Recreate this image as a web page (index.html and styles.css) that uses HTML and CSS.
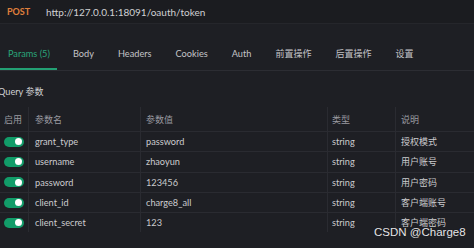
FILE: index.html
```html
<!DOCTYPE html>
<html>
<head>
<meta charset="utf-8">
<link rel="stylesheet" href="styles.css">
</head>
<body>
<div class="page">
  <div class="topbar">
    <span class="method">POST</span>
    <span class="url">http://127.0.0.1:18091/oauth/token</span>
  </div>
  <div class="tabs">
    <div class="tab active">Params (5)</div>
    <div class="tab">Body</div>
    <div class="tab">Headers</div>
    <div class="tab">Cookies</div>
    <div class="tab">Auth</div>
    <div class="tab zh">前置操作</div>
    <div class="tab zh">后置操作</div>
    <div class="tab zh">设置</div>
  </div>
  <div class="section-title">Query <span class="zh">参数</span></div>
  <div class="table">
    <div class="row head">
      <div class="cell c1 zh">启用</div>
      <div class="cell c2 zh">参数名</div>
      <div class="cell c3 zh">参数值</div>
      <div class="cell c4 zh">类型</div>
      <div class="cell c5 zh">说明</div>
    </div>
    <div class="row">
      <div class="cell c1"><span class="toggle"></span></div>
      <div class="cell c2">grant_type</div>
      <div class="cell c3">password</div>
      <div class="cell c4">string</div>
      <div class="cell c5 zh">授权模式</div>
    </div>
    <div class="row">
      <div class="cell c1"><span class="toggle"></span></div>
      <div class="cell c2">username</div>
      <div class="cell c3">zhaoyun</div>
      <div class="cell c4">string</div>
      <div class="cell c5 zh">用户账号</div>
    </div>
    <div class="row">
      <div class="cell c1"><span class="toggle"></span></div>
      <div class="cell c2">password</div>
      <div class="cell c3">123456</div>
      <div class="cell c4">string</div>
      <div class="cell c5 zh">用户密码</div>
    </div>
    <div class="row">
      <div class="cell c1"><span class="toggle"></span></div>
      <div class="cell c2">client_id</div>
      <div class="cell c3">charge8_all</div>
      <div class="cell c4">string</div>
      <div class="cell c5 zh">客户端账号</div>
    </div>
    <div class="row last">
      <div class="cell c1"><span class="toggle"></span></div>
      <div class="cell c2">client_secret</div>
      <div class="cell c3">123</div>
      <div class="cell c4">string</div>
      <div class="cell c5 zh">客户端密码</div>
    </div>
  </div>
  <div class="watermark">CSDN @Charge8</div>
</div>
</body>
</html>
```

FILE: styles.css
```css
html, body {
  margin: 0;
  padding: 0;
  background: #1e1f24;
}
.page {
  position: relative;
  width: 474px;
  height: 248px;
  overflow: hidden;
  font-family: Lato, "Noto Sans", "Noto Sans CJK SC", sans-serif;
  font-size: 9.2px;
  color: #cbcbce;
  background: #1e1f24;
}
.zh {
  font-size: 9px;
}
.topbar {
  height: 23px;
  display: flex;
  align-items: center;
  padding-left: 7px;
  background: #1b1c20;
  border-bottom: 1px solid #25262b;
}
.method {
  color: #e0803c;
  font-weight: 700;
  font-size: 9px;
  width: 39px;
}
.url {
  color: #d0d0d3;
  font-size: 10px;
}
.tabs {
  margin-top: 16px;
  height: 30px;
  display: flex;
  align-items: flex-start;
  gap: 24px;
  border-bottom: 1px solid #2c2d33;
}
.tab {
  line-height: 28px;
  color: #c4c4c8;
  white-space: nowrap;
}
.tab.active {
  color: #2aa57a;
  border-bottom: 2px solid #23a074;
  padding: 0 8px;
  width: 41px;
  margin-right: -8px;
}
.section-title {
  margin-top: 12px;
  margin-left: -2px;
  height: 20px;
  line-height: 18px;
  color: #d0d0d3;
}
.table {
  margin-top: 1px;
}
.row {
  display: flex;
  height: 20.3px;
  box-sizing: border-box;
  align-items: stretch;
  border-bottom: 1px solid #2a2b31;
}
.row.head {
  height: 28px;
  padding-top: 3px;
}
.row.last {
  border-bottom: 1px solid #1e1f24;
}
.cell {
  display: flex;
  align-items: center;
  padding-left: 6px;
  box-sizing: border-box;
  border-right: 1px solid #2a2b31;
  white-space: nowrap;
}
.head .cell {
  color: #9a9aa0;
}
.c1 { width: 29px; padding-left: 4px; }
.head .c1 { padding-left: 4px; }
.c2 { width: 112px; }
.c3 { width: 187px; padding-left: 5px; }
.c4 { width: 68px; padding-left: 4px; }
.c5 { flex: 1; border-right: none; padding-left: 5px; }
.toggle {
  position: relative;
  display: inline-block;
  width: 20px;
  height: 10px;
  border-radius: 5px;
  background: #129c69;
}
.toggle::after {
  content: "";
  position: absolute;
  right: 2px;
  top: 1.5px;
  width: 7px;
  height: 7px;
  border-radius: 50%;
  background: #ffffff;
}
.watermark {
  position: absolute;
  left: 374px;
  top: 226px;
  white-space: nowrap;
  font-family: "Liberation Sans", Arial, sans-serif;
  font-size: 11.5px;
  color: #e6e6e8;
  text-shadow: 0 0 1px rgba(0,0,0,0.5);
}
```
